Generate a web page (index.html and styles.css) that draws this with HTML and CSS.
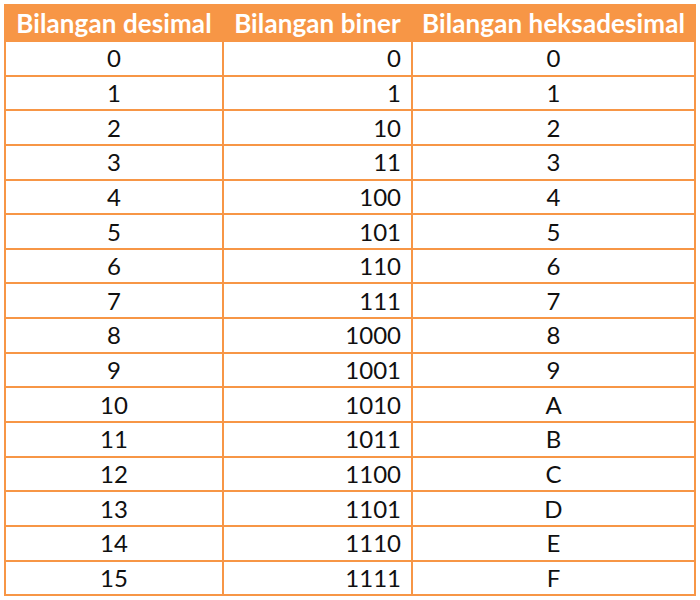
FILE: index.html
```html
<!DOCTYPE html>
<html>
<head>
<meta charset="utf-8">
<link rel="stylesheet" href="styles.css">
</head>
<body>
<table class="conv">
<colgroup><col class="c1"><col class="c2"><col class="c3"></colgroup>
<thead>
<tr><th>Bilangan desimal</th><th>Bilangan biner</th><th>Bilangan heksadesimal</th></tr>
</thead>
<tbody>
<tr><td>0</td><td class="r">0</td><td>0</td></tr>
<tr><td>1</td><td class="r">1</td><td>1</td></tr>
<tr><td>2</td><td class="r">10</td><td>2</td></tr>
<tr><td>3</td><td class="r">11</td><td>3</td></tr>
<tr><td>4</td><td class="r">100</td><td>4</td></tr>
<tr><td>5</td><td class="r">101</td><td>5</td></tr>
<tr><td>6</td><td class="r">110</td><td>6</td></tr>
<tr><td>7</td><td class="r">111</td><td>7</td></tr>
<tr><td>8</td><td class="r">1000</td><td>8</td></tr>
<tr><td>9</td><td class="r">1001</td><td>9</td></tr>
<tr><td>10</td><td class="r">1010</td><td>A</td></tr>
<tr><td>11</td><td class="r">1011</td><td>B</td></tr>
<tr><td>12</td><td class="r">1100</td><td>C</td></tr>
<tr><td>13</td><td class="r">1101</td><td>D</td></tr>
<tr><td>14</td><td class="r">1110</td><td>E</td></tr>
<tr><td>15</td><td class="r">1111</td><td>F</td></tr>
</tbody>
</table>
</body>
</html>
```
FILE: styles.css
```css
html, body {
  margin: 0;
  padding: 0;
  background: #ffffff;
}
.conv {
  margin: 4px 0 0 4px;
  width: 690px;
  table-layout: fixed;
  border-collapse: collapse;
  font-family: Lato, "Open Sans", sans-serif;
  font-size: 24px;
  color: #101010;
}
.c1 { width: 218px; }
.c2 { width: 189px; }
.c3 { width: 283px; }
.conv th, .conv td {
  border: 2px solid #f79646;
  padding: 0 10px;
  text-align: center;
  vertical-align: middle;
  line-height: 1;
  white-space: nowrap;
}
.conv th {
  height: 34px;
  background: #f79646;
  color: #ffffff;
  font-weight: 700;
  font-size: 26px;
  letter-spacing: 0.1px;
  padding: 0 2px;
}
.conv td {
  height: 32.65px;
}
.conv td.r {
  text-align: right;
}
```
